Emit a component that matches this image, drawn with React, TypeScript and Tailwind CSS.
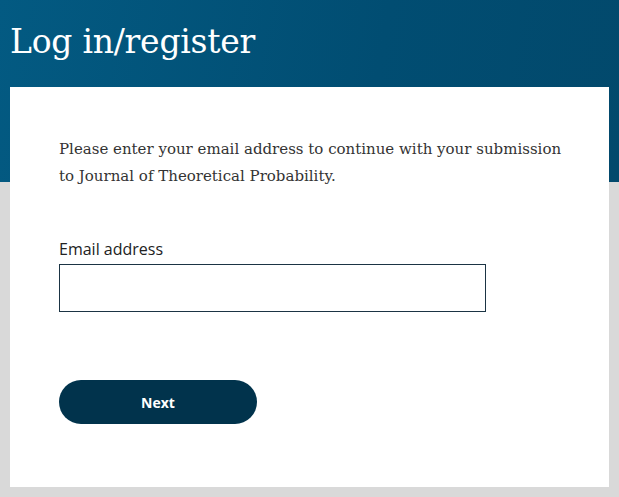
import React, { useState } from 'react';

const serif = { fontFamily: '"DejaVu Serif", "Liberation Serif", serif' };

export default function App() {
  const [email, setEmail] = useState('');

  return (
    <div className="min-h-screen w-full bg-[#d9d9d9]">
      {/* Header band */}
      <div className="h-[182px] bg-[linear-gradient(100deg,#035a82_0%,#014d72_60%,#02496c_100%)] px-[10px] pt-[20px]">
        <h1 className="text-[33px] leading-[44px] text-white tracking-[-0.25px]" style={serif}>
          Log in/register
        </h1>
      </div>

      {/* Card */}
      <div className="mx-[10px] -mt-[95px] h-[400px] bg-white px-[49px] pt-[49px]">
        <p className="whitespace-nowrap text-[15px] leading-[27px] text-[#333333]" style={serif}>
          Please enter your email address to continue with your submission
          <br />
          to Journal of Theoretical Probability.
        </p>

        <label
          htmlFor="email"
          className="mt-[49px] block text-[16px] leading-[20px] text-[#222222]"
          style={{ fontFamily: '"Open Sans", "Liberation Sans", sans-serif' }}
        >
          Email address
        </label>
        <input
          id="email"
          type="email"
          value={email}
          onChange={e => setEmail(e.target.value)}
          className="mt-[5px] block h-[48px] w-[427px] border border-[#1b3444] bg-white px-3 outline-none"
        />

        <button
          type="button"
          className="mt-[68px] flex h-[44px] w-[198px] items-center justify-center rounded-full bg-[#01334c] text-[14px] font-bold text-white"
          style={{ fontFamily: '"Open Sans", "Liberation Sans", sans-serif' }}
        >
          Next
        </button>
      </div>
    </div>
  );
}
